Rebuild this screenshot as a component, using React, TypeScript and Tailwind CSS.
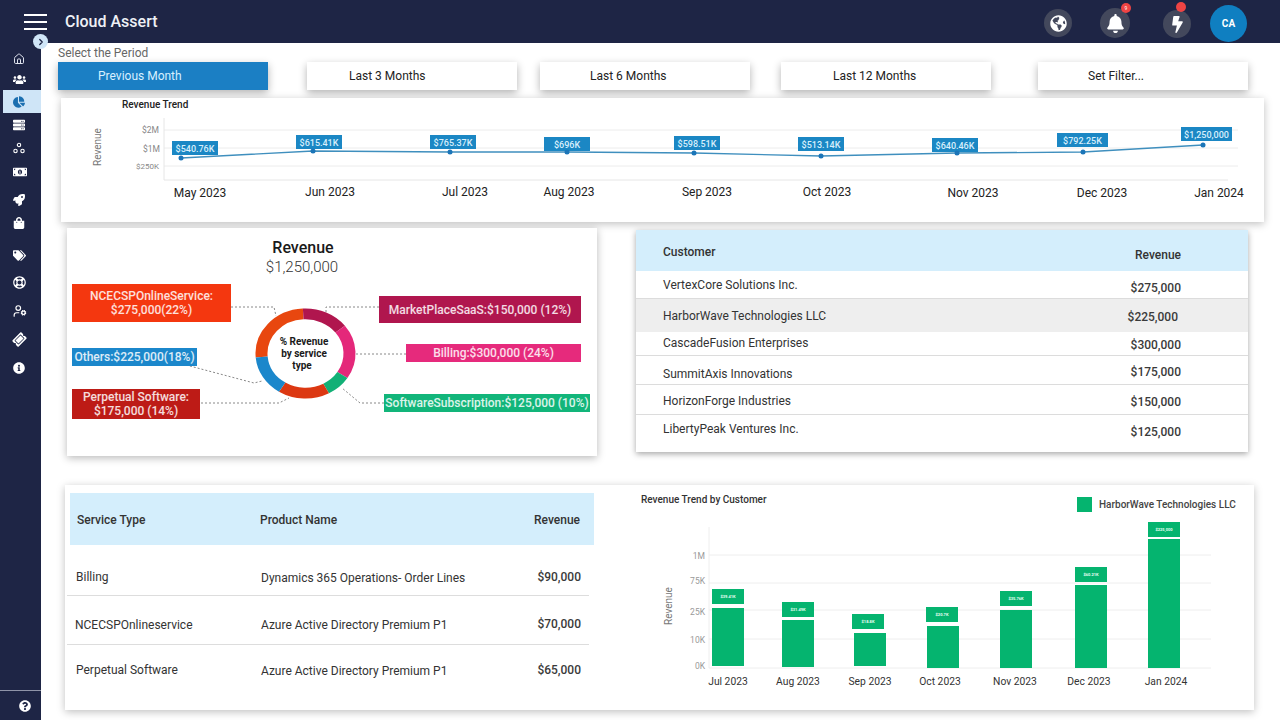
import React from "react";
import { FaUsers, FaChartPie, FaServer, FaRocket, FaShoppingBag, FaTags, FaRegLifeRing, FaTicketAlt, FaInfoCircle, FaQuestionCircle, FaGlobeAmericas, FaBell, FaBolt, FaMoneyBillAlt } from "react-icons/fa";
import { Home, UserCog, ChevronRight } from "lucide-react";

const linePts: [number, number][] = [[181,158],[313,151],[450,152],[567,152],[694,153],[821,156],[957,153],[1083,152],[1203,145]];
const lineLabels = [
  { t: "$540.76K", x: 172, y: 141, w: 46, h: 14 },
  { t: "$615.41K", x: 296, y: 135, w: 46, h: 14 },
  { t: "$765.37K", x: 430, y: 135, w: 46, h: 14 },
  { t: "$696K", x: 544, y: 137, w: 46, h: 14 },
  { t: "$598.51K", x: 674, y: 136, w: 46, h: 14 },
  { t: "$513.14K", x: 798, y: 137, w: 46, h: 14 },
  { t: "$640.46K", x: 932, y: 138, w: 46, h: 14 },
  { t: "$792.25K", x: 1057, y: 133, w: 51, h: 14 },
  { t: "$1,250,000", x: 1181, y: 127, w: 51, h: 14 },
];
const lineX = [["May 2023",200,193],["Jun 2023",330,192],["Jul 2023",465,192],["Aug 2023",569,192],["Sep 2023",707,192],["Oct 2023",827,192],["Nov 2023",973,193],["Dec 2023",1102,193],["Jan 2024",1219,193]] as const;

const bars = [
  { x: 712, top: 608, bot: 666, lx: 712, ly: 589, t: "$39.41K", m: "Jul 2023", cx: 728 },
  { x: 782, top: 620, bot: 667, lx: 782, ly: 602, t: "$31.49K", m: "Aug 2023", cx: 798 },
  { x: 854, top: 633, bot: 666, lx: 852, ly: 614, t: "$18.8K", m: "Sep 2023", cx: 870 },
  { x: 927, top: 626, bot: 668, lx: 926, ly: 607, t: "$20.7K", m: "Oct 2023", cx: 940 },
  { x: 1000, top: 610, bot: 668, lx: 1000, ly: 591, t: "$35.76K", m: "Nov 2023", cx: 1015 },
  { x: 1075, top: 585, bot: 668, lx: 1075, ly: 567, t: "$60.21K", m: "Dec 2023", cx: 1089 },
  { x: 1148, top: 539, bot: 668, lx: 1148, ly: 522, t: "$225,000", m: "Jan 2024", cx: 1166 },
];

const arc = (a0: number, a1: number, r: number) => {
  const p = (a: number) => {
    const t = ((a - 90) * Math.PI) / 180;
    return `${(r * Math.cos(t)).toFixed(2)} ${(r * Math.sin(t)).toFixed(2)}`;
  };
  return `M ${p(a0)} A ${r} ${r} 0 ${a1 - a0 > 180 ? 1 : 0} 1 ${p(a1)}`;
};
const segs: [number, number, string][] = [
  [-95, -3, "#e8470f"],
  [-3, 52, "#b0164e"],
  [52, 123, "#e4287a"],
  [123, 152, "#12b076"],
  [152, 212, "#dc3812"],
  [212, 265, "#1b87cb"],
];
const leaders = [
  "231,307 274,307 276,316",
  "379,307 326,307 326,312",
  "406,354 356,354",
  "186,365 254,383 262,381",
  "201,403 279,403 289,398",
  "384,403 360,403 342,388",
];

const customers = [
  { n: "VertexCore Solutions Inc.", r: "$275,000", row: "h-[28px] border-b border-[#dcdcdc]", a: "pt-[6px]", b: "pt-[9px] pr-[67px]" },
  { n: "HarborWave Technologies LLC", r: "$225,000", row: "h-[33px] bg-[#eeeeee]", a: "pt-[9px]", b: "pt-[10px] pr-[70px]" },
  { n: "CascadeFusion Enterprises", r: "$300,000", row: "h-[24px] border-b border-[#dcdcdc]", a: "pt-[3px]", b: "pt-[5px] pr-[67px]" },
  { n: "SummitAxis Innovations", r: "$175,000", row: "h-[29px] border-b border-[#dcdcdc]", a: "pt-[10px]", b: "pt-[8px] pr-[67px]" },
  { n: "HorizonForge Industries", r: "$150,000", row: "h-[30px] border-b border-[#dcdcdc]", a: "pt-[8px]", b: "pt-[9px] pr-[67px]" },
  { n: "LibertyPeak Ventures Inc.", r: "$125,000", row: "h-[37px]", a: "pt-[6px]", b: "pt-[9px] pr-[67px]" },
];

const services = [
  { s: "Billing", p: "Dynamics 365 Operations- Order Lines", r: "$90,000", row: "h-[51px] border-b border-[#dddddd]", a: "pt-[24px] pl-[9px]", b: "pt-[25px]", c: "pt-[24px]" },
  { s: "NCECSPOnlineservice", p: "Azure Active Directory Premium P1", r: "$70,000", row: "h-[49px] border-b border-[#dddddd]", a: "pt-[21px] pl-[8px]", b: "pt-[21px]", c: "pt-[20px]" },
  { s: "Perpetual Software", p: "Azure Active Directory Premium P1", r: "$65,000", row: "h-[48px]", a: "pt-[17px] pl-[9px]", b: "pt-[18px]", c: "pt-[17px]" },
];

const Nodes = () => (
  <svg width="12" height="12" viewBox="0 0 12 12" fill="none" stroke="#fff" strokeWidth="1.1">
    <circle cx="6" cy="3" r="1.7" />
    <circle cx="2.5" cy="9" r="1.7" />
    <circle cx="9.5" cy="9" r="1.7" />
  </svg>
);

const Btn = ({ label, cls, active }: { label: string; cls: string; active?: boolean }) => (
  <div className={`h-[28px] w-[210px] flex items-center text-[12px] ${cls} ${active ? "bg-[#1b7fc4] text-[#d8f0ff] shadow-[0_3px_8px_rgba(0,0,0,0.3)]" : "bg-white text-[#222222] shadow-[0_3px_8px_rgba(0,0,0,0.3)]"}`}>
    {label}
  </div>
);

const Labels = [
  { cls: "left-[5px] top-[56px] w-[159px] h-[38px] bg-[#f4370f]", l: ["NCECSPOnlineService:", "$275,000(22%)"] },
  { cls: "left-[312px] top-[68px] w-[202px] h-[27px] bg-[#b0164e]", l: ["MarketPlaceSaaS:$150,000 (12%)"] },
  { cls: "left-[339px] top-[116px] w-[175px] h-[18px] bg-[#e62a7c]", l: ["Billing:$300,000 (24%)"] },
  { cls: "left-[5px] top-[120px] w-[125px] h-[18px] bg-[#1b87cb]", l: ["Others:$225,000(18%)"] },
  { cls: "left-[5px] top-[161px] w-[128px] h-[30px] bg-[#bd1b16]", l: ["Perpetual Software:", "$175,000 (14%)"] },
  { cls: "left-[317px] top-[166px] w-[206px] h-[18px] bg-[#12b57a]", l: ["SoftwareSubscription:$125,000 (10%)"] },
];

export default function App() {
  return (
    <div className="relative w-[1280px] h-[720px] overflow-hidden bg-white flex flex-col font-['Roboto',sans-serif] text-[#222222]">
      <header className="h-[43px] shrink-0 bg-[#1e2545] flex items-center text-white">
        <div className="ml-[24px] mt-[1px] w-[23px] flex flex-col gap-[5px]">
          <span className="h-[2px] bg-white" />
          <span className="h-[2px] bg-white" />
          <span className="h-[2px] bg-white" />
        </div>
        <span className="ml-[18px] text-[16px] font-medium text-[#eef0f5]">Cloud Assert</span>
        <div className="ml-auto mr-[33px] mt-[3px] flex items-center">
          <div className="w-[28px] h-[28px] rounded-full bg-[#43485c] flex items-center justify-center">
            <FaGlobeAmericas size={17} color="#fff" />
          </div>
          <div className="relative ml-[28px] w-[30px] h-[30px] rounded-full bg-[#43485c] flex items-center justify-center">
            <FaBell size={19} color="#fff" />
            <span className="absolute -top-[5px] right-[-1px] w-[10px] h-[10px] rounded-full bg-[#ef4444] text-[5px] leading-[10px] text-center">9</span>
          </div>
          <div className="relative ml-[33px] mt-[2px] w-[28px] h-[28px] rounded-full bg-[#43485c] flex items-center justify-center">
            <FaBolt size={17} color="#fff" />
            <span className="absolute -top-[8px] right-[5px] w-[10px] h-[10px] rounded-full bg-[#ef4444]" />
          </div>
          <div className="ml-[19px] w-[37px] h-[37px] rounded-full bg-[#0f7fc1] flex items-center justify-center text-[10px] font-bold">CA</div>
        </div>
      </header>

      <div className="flex flex-1 min-h-0">
        <aside className="w-[41px] shrink-0 bg-[#1e2545] flex flex-col text-white">
          <div className="pl-[13px] flex flex-col items-start">
            <Home size={12} className="mt-[10px]" color="#dfe3ee" />
            <FaUsers size={13} className="mt-[8px]" />
          </div>
          <div className="mt-[4px] ml-[3px] h-[23px] bg-[#cfe5f7] flex items-center pl-[10px]">
            <FaChartPie size={12} color="#1b6fb0" />
          </div>
          <div className="pl-[13px] flex flex-col items-start">
            <FaServer size={12} className="mt-[6px]" />
            <div className="mt-[11px]"><Nodes /></div>
            <FaMoneyBillAlt size={14} className="mt-[11px]" />
            <FaRocket size={12} className="mt-[15px]" />
            <FaShoppingBag size={12} className="mt-[11px]" />
            <FaTags size={13} className="mt-[20px]" />
            <FaRegLifeRing size={13} className="mt-[14px]" />
            <UserCog size={14} className="mt-[15px]" />
            <FaTicketAlt size={13} className="mt-[15px] -rotate-45" />
            <FaInfoCircle size={12} className="mt-[16px]" />
          </div>
          <div className="mt-auto h-[30px] border-t border-[#8f94a8] flex items-center pl-[19px]">
            <FaQuestionCircle size={12} />
          </div>
        </aside>

        <main className="flex-1 min-w-0 flex flex-col">
          <div className="pt-[2px] pl-[17px] text-[12px] leading-[16px] text-[#666666]">Select the Period</div>
          <div className="mt-[1px] pl-[17px] flex">
            <Btn label="Previous Month" cls="pl-[40px]" active />
            <Btn label="Last 3 Months" cls="ml-[39px] pl-[42px]" />
            <Btn label="Last 6 Months" cls="ml-[23px] pl-[50px]" />
            <Btn label="Last 12 Months" cls="ml-[31px] pl-[52px]" />
            <Btn label="Set Filter..." cls="ml-[47px] pl-[50px]" />
          </div>

          <section className="mt-[8px] ml-[20px] w-[1203px] h-[124px] bg-white shadow-[0_2px_8px_rgba(0,0,0,0.25)]">
            <svg width="1203" height="124" viewBox="61 98 1203 124" className="block" fontFamily="Roboto, sans-serif">
              <text x="122" y="108" fontSize="10" fontWeight="500" fill="#222">Revenue Trend</text>
              <text transform="translate(101 147) rotate(-90)" textAnchor="middle" fontSize="10" fill="#777">Revenue</text>
              {[130, 148, 166].map((y) => (
                <line key={y} x1="164" x2="1238" y1={y} y2={y} stroke="#ececec" />
              ))}
              <line x1="164" x2="164" y1="118" y2="180" stroke="#e6e6e6" />
              <line x1="164" x2="1228" y1="180" y2="180" stroke="#e6e6e6" />
              <text x="159" y="133" textAnchor="end" fontSize="8.5" fill="#888">$2M</text>
              <text x="160" y="152" textAnchor="end" fontSize="8.5" fill="#888">$1M</text>
              <text x="159" y="169" textAnchor="end" fontSize="8" fill="#888">$250K</text>
              {lineLabels.map((l) => (
                <g key={l.t}>
                  <rect x={l.x} y={l.y} width={l.w} height={l.h} fill="#1b87c4" />
                  <text x={l.x + l.w / 2} y={l.y + 10.5} textAnchor="middle" fontSize="9" fontWeight="500" fill="#d8effc">{l.t}</text>
                </g>
              ))}
              <polyline points={linePts.map((p) => p.join(",")).join(" ")} fill="none" stroke="#3f8fbe" strokeWidth="1.3" />
              {linePts.map(([x, y]) => (
                <circle key={x} cx={x} cy={y} r="2.5" fill="#1b75b8" />
              ))}
              {lineX.map(([t, x, y]) => (
                <text key={t} x={x} y={y + 4} textAnchor="middle" fontSize="12" fill="#222">{t}</text>
              ))}
            </svg>
          </section>

          <div className="mt-[6px] flex items-start">
            <section className="relative ml-[26px] w-[530px] h-[228px] bg-white shadow-[0_2px_8px_rgba(0,0,0,0.28)] flex flex-col items-center">
              <div className="mt-[10px] ml-[-58px] text-[16px] leading-[20px] font-medium text-[#1a1a1a]">Revenue</div>
              <div className="ml-[-60px] text-[15px] leading-[19px] font-light text-[#333333]">$1,250,000</div>
              <svg width="530" height="228" viewBox="67 228 530 228" className="absolute left-0 top-0" fontFamily="Roboto, sans-serif">
                {leaders.map((p) => (
                  <polyline key={p} points={p} fill="none" stroke="#888" strokeWidth="1" strokeDasharray="2 2" />
                ))}
                <g transform="translate(305.5 353.5) scale(1 0.9)">
                  {segs.map(([a, b, c]) => (
                    <path key={c} d={arc(a, b, 44)} fill="none" stroke={c} strokeWidth="12" />
                  ))}
                </g>
                <text x="304" y="345" textAnchor="middle" fontSize="10" fontWeight="700" fill="#1a1a1a">% Revenue</text>
                <text x="304" y="357" textAnchor="middle" fontSize="10" fontWeight="700" fill="#1a1a1a">by service</text>
                <text x="302" y="369" textAnchor="middle" fontSize="10" fontWeight="700" fill="#1a1a1a">type</text>
              </svg>
              {Labels.map((d) => (
                <div key={d.l[0]} className={`absolute flex flex-col items-center justify-center text-center text-[12px] leading-[14px] font-medium text-white/85 ${d.cls}`}>
                  {d.l.map((t) => (
                    <span key={t}>{t}</span>
                  ))}
                </div>
              ))}
            </section>

            <section className="ml-[39px] mt-[2px] w-[612px] h-[222px] bg-white shadow-[0_2px_6px_rgba(0,0,0,0.35)]">
              <div className="h-[41px] bg-[#d4eefc] flex justify-between text-[12px] leading-[16px] font-medium text-[#333333]">
                <span className="pl-[27px] pt-[14px]">Customer</span>
                <span className="pr-[67px] pt-[17px]">Revenue</span>
              </div>
              {customers.map((c) => (
                <div key={c.n} className={`flex justify-between text-[12px] leading-[16px] ${c.row}`}>
                  <span className={`pl-[27px] text-[#333333] ${c.a}`}>{c.n}</span>
                  <span className={`font-medium text-[#3a3a3a] ${c.b}`}>{c.r}</span>
                </div>
              ))}
            </section>
          </div>

          <section className="mt-[29px] ml-[24px] w-[1189px] h-[225px] bg-white shadow-[0_2px_8px_rgba(0,0,0,0.25)] flex">
            <div className="ml-[2px] w-[527px] shrink-0 pt-[8px] flex flex-col">
              <div className="ml-[3px] w-[524px] h-[52px] bg-[#d4eefc] pt-[1px] grid grid-cols-[190px_1fr_auto] items-center text-[12px] font-medium text-[#333333]">
                <span className="pl-[7px]">Service Type</span>
                <span>Product Name</span>
                <span className="pr-[14px]">Revenue</span>
              </div>
              {services.map((s) => (
                <div key={s.s} className={`w-[522px] grid grid-cols-[194px_1fr_auto] text-[12px] leading-[16px] ${s.row}`}>
                  <span className={`text-[#333333] ${s.a}`}>{s.s}</span>
                  <span className={`text-[#333333] ${s.b}`}>{s.p}</span>
                  <span className={`pr-[8px] font-medium text-[#3a3a3a] ${s.c}`}>{s.r}</span>
                </div>
              ))}
            </div>
            <svg width="624" height="225" viewBox="630 485 624 225" className="ml-[36px] block" fontFamily="Roboto, sans-serif">
              <text x="641" y="503" fontSize="10" fontWeight="500" fill="#333">Revenue Trend by Customer</text>
              <rect x="1077" y="497" width="15" height="15" fill="#05b46f" />
              <text x="1099" y="508" fontSize="10" fontWeight="500" fill="#444">HarborWave Technologies LLC</text>
              {[555, 583, 610, 639, 668].map((y) => (
                <line key={y} x1="709" x2="1211" y1={y} y2={y} stroke="#eeeeee" />
              ))}
              <line x1="709" x2="709" y1="527" y2="668" stroke="#eeeeee" />
              {[["1M", 559], ["75K", 584], ["25K", 615], ["10K", 643], ["0K", 669]].map(([t, y]) => (
                <text key={t} x="705" y={y} textAnchor="end" fontSize="8.5" fill="#999">{t}</text>
              ))}
              <text transform="translate(672 606) rotate(-90)" textAnchor="middle" fontSize="10" fill="#777">Revenue</text>
              {bars.map((b) => (
                <g key={b.m}>
                  <rect x={b.x} y={b.top} width="32" height={b.bot - b.top} fill="#05b46f" />
                  <rect x={b.lx} y={b.ly} width="32" height="15" fill="#05b46f" />
                  <text x={b.lx + 16} y={b.ly + 9} textAnchor="middle" fontSize="4" fontWeight="700" fill="#e8fff4">{b.t}</text>
                  <text x={b.cx} y="685" textAnchor="middle" fontSize="10.3" fill="#333">{b.m}</text>
                </g>
              ))}
            </svg>
          </section>
        </main>
      </div>

      <div className="absolute left-[33px] top-[34px] w-[15px] h-[15px] rounded-full bg-[#cfe5f7] flex items-center justify-center">
        <ChevronRight size={10} strokeWidth={3} color="#1e2545" />
      </div>
    </div>
  );
}
